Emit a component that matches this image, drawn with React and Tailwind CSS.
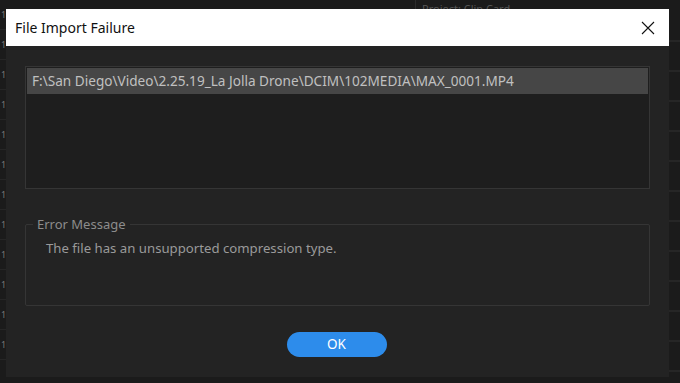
import React from "react";

export default function App() {
  const rows = Array.from({ length: 12 });
  return (
    <div className="relative w-[680px] h-[383px] bg-[#1b1b1b] overflow-hidden" style={{ fontFamily: '"Noto Sans", "Open Sans", sans-serif' }}>
      {/* background app hints */}
      <div className="absolute left-0 top-0 w-[6px] h-full flex flex-col">
        {rows.map((_, i) => (
          <div key={i} className="h-[30px] border-b border-[#262626] text-[9px] text-[#777] leading-[30px] pl-[1px]">1</div>
        ))}
      </div>
      <div className="absolute right-0 top-0 w-[11px] h-full flex flex-col pt-[12px]">
        {rows.map((_, i) => (
          <div key={i} className="h-[30px] border-b-2 border-[#262626]" />
        ))}
      </div>
      <div className="absolute left-[415px] top-0 h-[9px] w-[1px] bg-[#2c2c2c]" />
      <div className="absolute left-[422px] top-[2px] text-[11px] leading-[14px] text-[#555]">Project: Clip Card</div>

      {/* dialog */}
      <div className="absolute left-[6px] top-[9px] w-[663px] h-[368px] bg-[#232323] flex flex-col">
        <div className="h-[37px] bg-white flex items-center justify-between pl-[9px] pr-[14px] shrink-0">
          <span className="text-[14px] text-[#111]">File Import Failure</span>
          <svg width="14" height="14" viewBox="0 0 14 14">
            <path d="M1 1 L13 13 M13 1 L1 13" stroke="#111" strokeWidth="1.1" />
          </svg>
        </div>
        <div className="px-[19px] pt-[20px] flex flex-col">
          <div className="h-[123px] border border-[#353535] bg-[#1e1e1e] p-[1px]">
            <div className="h-[26px] bg-[#464646] text-[13.6px] text-[#c0c0c0] pl-[5px] leading-[26px] whitespace-nowrap">
              F:\San Diego\Video\2.25.19_La Jolla Drone\DCIM\102MEDIA\MAX_0001.MP4
            </div>
          </div>
          <div className="relative mt-[35px] h-[82px] border border-[#353535] rounded-[2px]">
            <div className="absolute left-[7px] top-[-10px] bg-[#232323] px-[4px] text-[13px] text-[#8c8c8c] leading-[18px]">Error Message</div>
            <div className="pl-[20px] pt-[14px] text-[13.2px] text-[#9a9a9a]">The file has an unsupported compression type.</div>
          </div>
          <div className="flex justify-center mt-[26px] pr-[2px]">
            <button className="w-[100px] h-[25px] rounded-full bg-[#2d8ceb] text-white text-[13.5px] leading-[25px]">OK</button>
          </div>
        </div>
      </div>
    </div>
  );
}
